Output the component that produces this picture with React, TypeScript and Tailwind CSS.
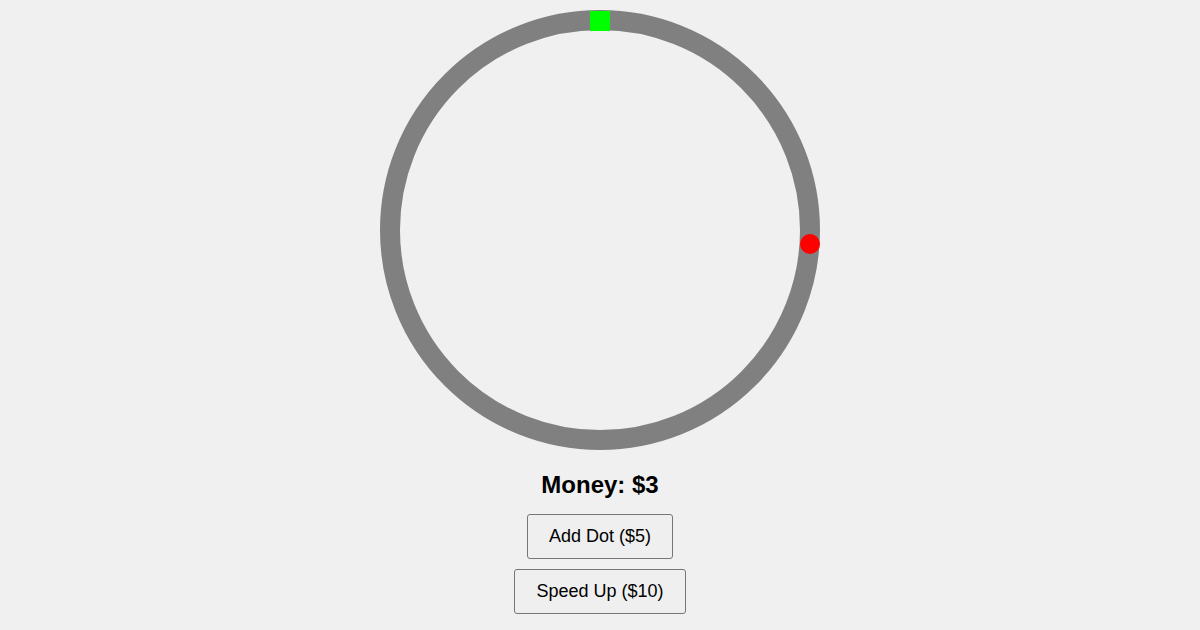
export default function App() {
  return (
    <div className="min-h-[630px] w-full bg-[#f0f0f0] flex flex-col items-center font-['Liberation_Sans',Arial,sans-serif] text-black">
      {/* track */}
      <div className="relative mt-[10px] w-[440px] h-[440px]">
        <div className="w-full h-full rounded-full border-[20px] border-[#808080]" />
        {/* start marker */}
        <div className="absolute left-[210px] top-[1px] w-[20px] h-[20px] bg-[#00ff00]" />
        {/* moving dot */}
        <div className="absolute left-[420px] top-[224px] w-[20px] h-[20px] rounded-full bg-[#ff0000]" />
      </div>

      <div className="mt-[21px] text-[24px] leading-[28px] font-bold">Money: $3</div>

      <div className="mt-[15px] flex flex-col items-center gap-[10px]">
        <button className="px-[21px] py-[11px] text-[18px] leading-[21px] bg-[#efefef] border border-[#767676] rounded-[3px]">
          Add Dot ($5)
        </button>
        <button className="px-[21px] py-[11px] text-[18px] leading-[21px] bg-[#efefef] border border-[#767676] rounded-[3px]">
          Speed Up ($10)
        </button>
      </div>
    </div>
  );
}
